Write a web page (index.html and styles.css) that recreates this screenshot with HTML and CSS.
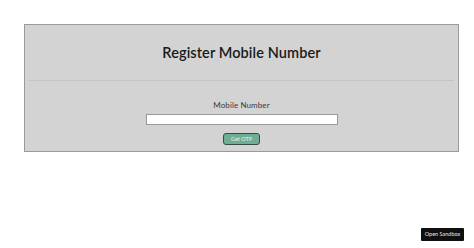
FILE: index.html
```html
<!DOCTYPE html>
<html>
<head>
<meta charset="utf-8">
<link rel="stylesheet" href="styles.css">
</head>
<body>
<div class="card">
  <h1 class="title">Register Mobile Number</h1>
  <hr class="divider">
  <form class="form">
    <label class="label" for="mobile">Mobile Number</label>
    <input class="input" id="mobile" type="text">
    <button class="btn" type="button">Get OTP</button>
  </form>
</div>
<div class="sandbox">Open Sandbox</div>
</body>
</html>
```
FILE: styles.css
```css
html, body {
  margin: 0;
  padding: 0;
  background: #ffffff;
  font-family: "Lato", "Open Sans", sans-serif;
}
body {
  width: 474px;
  height: 248px;
  position: relative;
  overflow: hidden;
}
.card {
  box-sizing: border-box;
  margin: 24px 0 0 24px;
  width: 435px;
  height: 128px;
  background: #d3d3d3;
  border: 1px solid #9a9a9a;
  display: flex;
  flex-direction: column;
}
.title {
  margin: 0;
  height: 55px;
  display: flex;
  align-items: center;
  justify-content: center;
  font-size: 14.5px;
  font-weight: 600;
  color: #1a1a1a;
  letter-spacing: 0.1px;
}
.divider {
  margin: 0 4px;
  border: 0;
  border-top: 1px solid #c4c4c4;
  height: 0;
}
.form {
  display: flex;
  flex-direction: column;
  align-items: center;
  padding-top: 19px;
}
.label {
  font-size: 8px;
  font-weight: 400;
  color: #3a3a3a;
  line-height: 10px;
  letter-spacing: 0.1px;
}
.input {
  box-sizing: border-box;
  margin-top: 4px;
  width: 192px;
  height: 11px;
  border: 1px solid #9a9a9a;
  background: #fff;
  padding: 0;
}
.btn {
  box-sizing: border-box;
  margin-top: 8px;
  width: 37px;
  height: 12px;
  padding: 0;
  border: 1px solid #3d4a44;
  border-radius: 3px;
  background: #6fae95;
  color: #e8f3ee;
  font-family: "Lato", sans-serif;
  font-size: 5.5px;
  line-height: 10px;
}
.sandbox {
  position: absolute;
  left: 421px;
  top: 228px;
  width: 43px;
  height: 13px;
  background: #0f0f0f;
  color: #e6e6e6;
  font-size: 5.5px;
  line-height: 13px;
  text-align: center;
  border-radius: 1px;
}
```
